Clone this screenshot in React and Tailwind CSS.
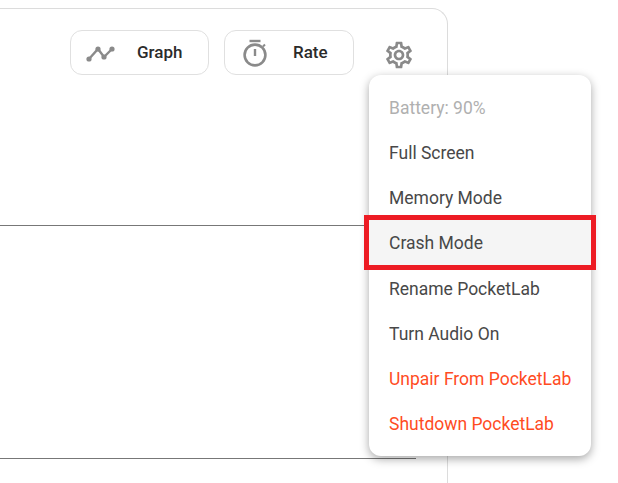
import React from "react";
import { MdOutlineSettings } from "react-icons/md";

const GraphIcon = () => (
  <svg width="32" height="24" viewBox="0 0 32 24" fill="none" className="text-[#8a8a8a]">
    <polyline points="4,18 13,8 19,16 27,8" stroke="currentColor" strokeWidth="2.4" />
    <circle cx="4" cy="18" r="2.6" fill="currentColor" />
    <circle cx="13" cy="8" r="2.6" fill="currentColor" />
    <circle cx="19" cy="16" r="2.6" fill="currentColor" />
    <circle cx="27" cy="8" r="2.6" fill="currentColor" />
  </svg>
);

const RateIcon = () => (
  <svg width="26" height="28" viewBox="0 0 26 28" fill="none" stroke="#8a8a8a" className="shrink-0">
    <circle cx="13" cy="16" r="10.4" strokeWidth="2.6" />
    <line x1="7.5" y1="2" x2="18.5" y2="2" strokeWidth="2.4" />
    <line x1="13" y1="10" x2="13" y2="17" strokeWidth="2.4" />
    <line x1="21" y1="7.5" x2="23" y2="5.5" strokeWidth="2" />
  </svg>
);

const menuItems = [
  { label: "Battery: 90%", className: "text-[#b0b0b0]" },
  { label: "Full Screen", className: "text-[#484848]" },
  { label: "Memory Mode", className: "text-[#484848]" },
  { label: "Crash Mode", className: "text-[#484848] bg-[#f5f5f5] outline-5 outline-[#ed1c24]" },
  { label: "Rename PocketLab", className: "text-[#484848]" },
  { label: "Turn Audio On", className: "text-[#484848]" },
  { label: "Unpair From PocketLab", className: "text-[#ff4c1f]" },
  { label: "Shutdown PocketLab", className: "text-[#ff4c1f]" },
];

const App = () => {
  return (
    <div className="relative h-[483px] w-[618px] overflow-hidden bg-white pt-2 font-['Roboto',sans-serif]">
      <div className="h-[475px] w-[448px] rounded-tr-2xl border-t border-r border-[#dcdcdc]">
        <div className="flex h-[216px] items-start gap-[15px] pt-[21px] pl-[70px]">
          <button className="flex h-[45px] w-[139px] items-center rounded-xl border border-[#e0e0e0] pl-[14px] text-[17px] font-medium text-[#2b2b2b]">
            <GraphIcon />
            <span className="ml-5">Graph</span>
          </button>
          <button className="flex h-[45px] w-[130px] items-center rounded-xl border border-[#e0e0e0] pl-[17px] text-[17px] font-medium text-[#2b2b2b]">
            <RateIcon />
            <span className="ml-[25px]">Rate</span>
          </button>
          <MdOutlineSettings size={32} className="mt-[9px] ml-[14px] text-[#8a8a8a]" />
        </div>
        <div className="mr-[31px] h-[233px] border-t border-[#777777]" />
        <div className="mr-[31px] border-t border-[#777777]" />
      </div>

      <div className="absolute top-[75px] left-[369px] w-[222px] rounded-xl bg-white pt-[9.55px] pb-[10.45px] shadow-[0_3px_10px_rgba(0,0,0,0.35)]">
        {menuItems.map((item) => (
          <div key={item.label} className={`flex h-[45.15px] items-center whitespace-nowrap pt-0.5 pl-5 text-[17.5px] ${item.className}`}>
            {item.label}
          </div>
        ))}
      </div>
    </div>
  );
};

export default App;
